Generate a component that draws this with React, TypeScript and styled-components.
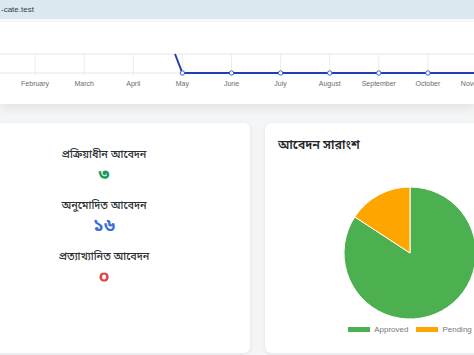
import React from "react";
import styled, { createGlobalStyle } from "styled-components";

const GlobalStyle = createGlobalStyle`
	html, body {
		margin: 0;
		padding: 0;
		background: #f4f5f7;
		overflow: hidden;
		width: 474px;
		height: 355px;
	}
	body {
		font-family: "Noto Sans Bengali", "Noto Sans", "Liberation Sans", sans-serif;
	}
`;

const Page = styled.div`
	width: 474px;
	height: 355px;
	display: flex;
	flex-direction: column;
`;

const AddressBar = styled.div`
	height: 19px;
	background: #dce8ef;
	display: flex;
	align-items: center;
	padding-left: 1px;
	font-family: "Liberation Sans", Arial, sans-serif;
	font-size: 8px;
	color: #3a3f44;
	flex-shrink: 0;
`;

const BarGap = styled.div`
	height: 3px;
	background: #f7fafb;
	flex-shrink: 0;
`;

const ChartCard = styled.div`
	height: 82px;
	background: #ffffff;
	box-shadow: 0 5px 9px rgba(0, 0, 0, 0.07);
	flex-shrink: 0;
`;

const CardsRow = styled.div`
	margin-top: 19px;
	margin-left: -42px;
	display: grid;
	grid-template-columns: 292px 292px;
	gap: 15px;
`;

const Card = styled.div`
	height: 230px;
	background: #ffffff;
	border-radius: 6px;
	box-shadow: 0 1px 4px rgba(0, 0, 0, 0.08);
	box-sizing: border-box;
	overflow: hidden;
`;

const StatsCard = styled(Card)`
	display: flex;
	flex-direction: column;
	align-items: center;
	padding-top: 23px;
`;

const Stat = styled.div`
	display: flex;
	flex-direction: column;
	align-items: center;
	height: 51px;
`;

const StatLabel = styled.div`
	font-size: 10.8px;
	font-weight: 500;
	color: #2b2f33;
	line-height: 18px;
`;

const StatValue = styled.div<{ $color: string }>`
	font-size: 18px;
	font-weight: 700;
	line-height: 22px;
	color: ${(p) => p.$color};
`;

const SummaryCard = styled(Card)`
	padding: 13px 0 0 13px;
	display: flex;
	flex-direction: column;
`;

const Title = styled.div`
	font-size: 12.5px;
	font-weight: 600;
	color: #22262a;
	line-height: 20px;
`;

const PieWrap = styled.div`
	width: 290px;
	display: flex;
	flex-direction: column;
	align-items: center;
	margin-top: 30px;
	margin-left: -13px;
`;

const Legend = styled.div`
	display: flex;
	align-items: center;
	gap: 8px;
	margin-top: 5px;
	font-family: "Liberation Sans", Arial, sans-serif;
	font-size: 8px;
	color: #777;
`;

const LegendItem = styled.div`
	display: flex;
	align-items: center;
	gap: 4px;
`;

const Swatch = styled.span<{ $color: string }>`
	width: 22px;
	height: 5px;
	background: ${(p) => p.$color};
`;

const months = [
	"January",
	"February",
	"March",
	"April",
	"May",
	"June",
	"July",
	"August",
	"September",
	"October",
	"November",
];

const LineChart = () => {
	const step = 49.1;
	const x0 = -14;
	const top = 32;
	const base = 51;
	return (
		<svg width="474" height="82" viewBox="0 0 474 82">
			<line x1="0" y1={top} x2="474" y2={top} stroke="#e6e6e6" strokeWidth="1" />
			<line x1="0" y1={base} x2="474" y2={base} stroke="#e6e6e6" strokeWidth="1" />
			{months.map((m, i) => {
				const x = x0 + step * i;
				return (
					<g key={m}>
						<line x1={x} y1={top} x2={x} y2={base + 3} stroke="#ececec" strokeWidth="1" />
						<text
							x={x}
							y={64}
							textAnchor="middle"
							fontSize="7"
							fill="#6b6b6b"
							fontFamily="Liberation Sans, Arial, sans-serif"
						>
							{m}
						</text>
					</g>
				);
			})}
			<polyline
				points={`175,${top} ${x0 + step * 4},${base} 474,${base}`}
				fill="none"
				stroke="#1f3fb5"
				strokeWidth="2"
			/>
			{months.slice(4).map((m, i) => (
				<circle
					key={m}
					cx={x0 + step * (i + 4)}
					cy={base}
					r="2.2"
					fill="#ffffff"
					stroke="#3b5fd0"
					strokeWidth="1"
				/>
			))}
		</svg>
	);
};

const PieChart = () => {
	const r = 66;
	const c = 67;
	const pending = 3 / 19;
	const a = pending * Math.PI * 2;
	const px = c - r * Math.sin(a);
	const py = c - r * Math.cos(a);
	return (
		<svg width="134" height="134" viewBox="0 0 134 134">
			<path
				d={`M${c},${c} L${c},${c - r} A${r},${r} 0 1,1 ${px},${py} Z`}
				fill="#4caf50"
				stroke="#ffffff"
				strokeWidth="1"
			/>
			<path
				d={`M${c},${c} L${px},${py} A${r},${r} 0 0,1 ${c},${c - r} Z`}
				fill="#ffa500"
				stroke="#ffffff"
				strokeWidth="1"
			/>
		</svg>
	);
};

export default function App() {
	return (
		<>
			<GlobalStyle />
			<Page>
				<AddressBar>‑cate.test</AddressBar>
				<BarGap />
				<ChartCard>
					<LineChart />
				</ChartCard>
				<CardsRow>
					<StatsCard>
						<Stat>
							<StatLabel>প্রক্রিয়াধীন আবেদন</StatLabel>
							<StatValue $color="#1b9a5a">৩</StatValue>
						</Stat>
						<Stat>
							<StatLabel>অনুমোদিত আবেদন</StatLabel>
							<StatValue $color="#3c6ed8">১৬</StatValue>
						</Stat>
						<Stat>
							<StatLabel>প্রত্যাখ্যানিত আবেদন</StatLabel>
							<StatValue $color="#e04648">০</StatValue>
						</Stat>
					</StatsCard>
					<SummaryCard>
						<Title>আবেদন সারাংশ</Title>
						<PieWrap>
							<PieChart />
							<Legend>
								<LegendItem>
									<Swatch $color="#4caf50" />
									Approved
								</LegendItem>
								<LegendItem>
									<Swatch $color="#ffa500" />
									Pending
								</LegendItem>
							</Legend>
						</PieWrap>
					</SummaryCard>
				</CardsRow>
			</Page>
		</>
	);
}
